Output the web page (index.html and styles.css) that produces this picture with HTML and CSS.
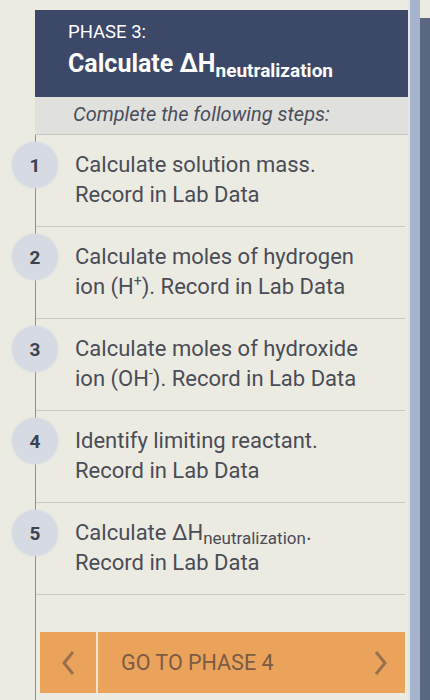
FILE: index.html
```html
<!DOCTYPE html>
<html lang="en">
<head>
    <meta charset="UTF-8">
    <meta name="viewport" content="width=device-width, initial-scale=1.0">
    <title>Phase 3</title>
    <link rel="stylesheet" href="styles.css">
</head>
<body>
    <div class="screen">
        <div class="panel">
            <div class="phase-header">
                <div class="phase-label">PHASE 3:</div>
                <div class="phase-title">Calculate &Delta;H<sub>neutralization</sub></div>
            </div>
            <div class="phase-intro">Complete the following steps:</div>

            <div class="steps">
                <div class="step">
                    <div class="step-num">1</div>
                    <div class="step-text">Calculate solution mass.<br>Record in Lab Data</div>
                </div>
                <div class="step">
                    <div class="step-num">2</div>
                    <div class="step-text">Calculate moles of hydrogen<br>ion (H<sup>+</sup>). Record in Lab Data</div>
                </div>
                <div class="step">
                    <div class="step-num">3</div>
                    <div class="step-text">Calculate moles of hydroxide<br>ion (OH<sup>-</sup>). Record in Lab Data</div>
                </div>
                <div class="step">
                    <div class="step-num">4</div>
                    <div class="step-text">Identify limiting reactant.<br>Record in Lab Data</div>
                </div>
                <div class="step">
                    <div class="step-num">5</div>
                    <div class="step-text">Calculate &Delta;H<sub>neutralization</sub>.<br>Record in Lab Data</div>
                </div>

                <div class="nav">
                    <button class="nav-prev" aria-label="Previous">
                        <svg width="16" height="28" viewBox="0 0 16 28"><path d="M13 3 L4 14 L13 25" fill="none" stroke="currentColor" stroke-width="3"/></svg>
                    </button>
                    <button class="nav-next">
                        <span>GO TO PHASE 4</span>
                        <svg width="16" height="28" viewBox="0 0 16 28"><path d="M3 3 L12 14 L3 25" fill="none" stroke="currentColor" stroke-width="3"/></svg>
                    </button>
                </div>
            </div>
        </div>
        <div class="edge-light"></div>
        <div class="edge-blue"></div>
        <div class="edge-dark"></div>
    </div>
</body>
</html>
```

FILE: styles.css
```css
* {
    margin: 0;
    padding: 0;
    box-sizing: border-box;
}

body {
    font-family: Roboto, "Liberation Sans", sans-serif;
    background-color: #ecebe2;
    width: 430px;
    height: 700px;
    overflow: hidden;
}

.screen {
    display: flex;
    height: 700px;
}

.panel {
    width: 373px;
    margin-left: 35px;
    margin-top: 10px;
    display: flex;
    flex-direction: column;
}

.edge-light {
    width: 2px;
    background-color: #e4e6e2;
}

.edge-blue {
    width: 10px;
    background-color: #a6b3cf;
}

.edge-dark {
    width: 10px;
    margin-top: 18px;
    background-color: #5b6680;
}

.phase-header {
    background-color: #3b4868;
    color: #fff;
    height: 87px;
    padding: 11px 0 0 33px;
}

.phase-label {
    font-size: 18.5px;
    line-height: 22px;
}

.phase-title {
    font-size: 25px;
    font-weight: bold;
    line-height: 30px;
    margin-top: 6px;
}

.phase-title sub {
    font-size: 19px;
    vertical-align: -5px;
    line-height: 0;
}

.phase-intro {
    background-color: #e0e0dc;
    height: 38px;
    padding: 5px 0 0 38px;
    font-size: 20px;
    font-style: italic;
    color: #4a4f5c;
    border-bottom: 1px solid #c9c9c2;
}

.steps {
    flex: 1;
    border-left: 1px solid #8e8e8c;
}

.step {
    display: flex;
    align-items: flex-start;
    height: 92px;
    padding-top: 7px;
    margin-right: 3px;
    border-bottom: 1px solid #c9c9c2;
}

.step-num {
    flex: 0 0 46px;
    height: 46px;
    margin-left: -24px;
    border-radius: 50%;
    background-color: #d6dae3;
    box-shadow: 0 0 3px #d6dae3;
    color: #3c4250;
    font-size: 19px;
    font-weight: bold;
    display: flex;
    align-items: center;
    justify-content: center;
}

.step-text {
    margin: 8px 0 0 17px;
    font-size: 22px;
    line-height: 30px;
    color: #4a4c56;
}

.step-text sup {
    font-size: 14px;
    line-height: 0;
}

.step-text sub {
    font-size: 17px;
    vertical-align: -4px;
    line-height: 0;
}

.nav {
    display: flex;
    height: 61px;
    margin: 37px 3px 0 4px;
    background-color: #eba35c;
}

.nav button {
    border: none;
    background: none;
    font-family: inherit;
    color: #98704e;
    display: flex;
    align-items: center;
}

.nav-prev {
    width: 58px;
    justify-content: center;
    border-right: 2px solid #f3e3cf !important;
}

.nav-next {
    flex: 1;
    justify-content: space-between;
    padding: 0 16px 0 23px;
    font-size: 21.5px;
    color: #7a5b43 !important;
}

.nav-next svg {
    color: #98704e;
}
```
